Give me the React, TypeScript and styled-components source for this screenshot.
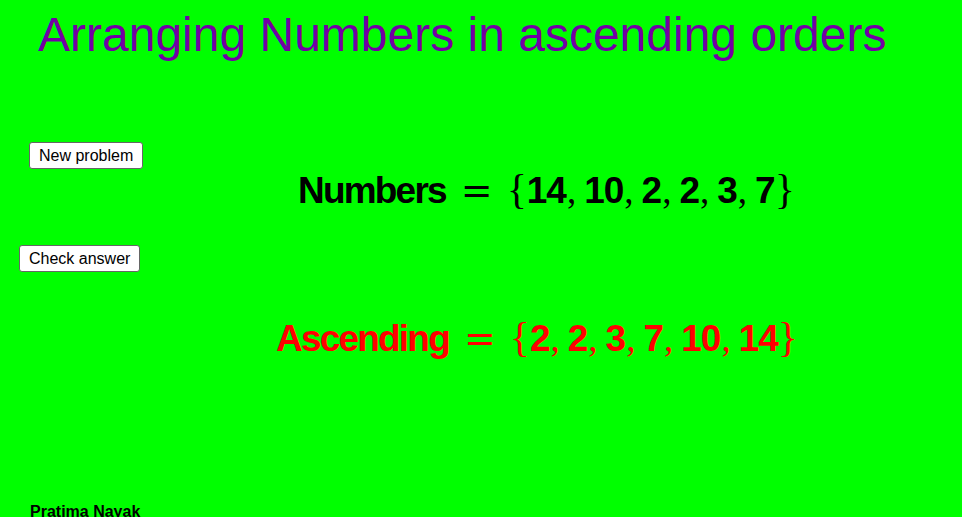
import styled, { createGlobalStyle } from "styled-components";

type OffsetProps = {
    $top: number;
    $left: number;
};

type EquationProps = OffsetProps & {
    $color: string;
};

const GlobalStyle = createGlobalStyle`
    html, body {
        margin: 0;
        padding: 0;
        background-color: #00ff00;
    }
`;

const Applet = styled.div`
    width: 962px;
    height: 517px;
    background-color: #00ff00;
    display: flex;
    flex-direction: column;
    overflow: hidden;
    font-family: "Liberation Sans", Arial, sans-serif;
`;

const Title = styled.h1`
    margin: 6px 0 0 38px;
    font-size: 48px;
    font-weight: normal;
    line-height: 58px;
    color: #7200a4;
    white-space: nowrap;
`;

const Board = styled.div`
    display: grid;
    grid-template-columns: 180px 1fr;
    flex: 1;
`;

const Controls = styled.div`
    display: flex;
    flex-direction: column;
    align-items: flex-start;
`;

const Button = styled.button<OffsetProps>`
    margin-top: ${(p) => p.$top}px;
    margin-left: ${(p) => p.$left}px;
    height: 27px;
    padding: 0 9px;
    background-color: #ffffff;
    border: 1px solid #666666;
    border-radius: 3px;
    font-family: "Liberation Sans", Arial, sans-serif;
    font-size: 16px;
    color: #000000;
    cursor: pointer;
`;

const Equations = styled.div`
    display: flex;
    flex-direction: column;
    align-items: flex-start;
`;

const Equation = styled.div<EquationProps>`
    margin-top: ${(p) => p.$top}px;
    margin-left: ${(p) => p.$left}px;
    display: flex;
    align-items: baseline;
    color: ${(p) => p.$color};
    font-family: "Liberation Sans", Arial, sans-serif;
    font-weight: bold;
    font-size: 37px;
    letter-spacing: -1px;
    line-height: 48px;
    white-space: nowrap;
`;

const Word = styled.span`
    letter-spacing: -1.8px;
`;

const Equals = styled.span`
    margin: 0 14px 0 15px;
    font-weight: normal;
    font-family: "DejaVu Sans", sans-serif;
    font-size: 38px;
    letter-spacing: 0;
`;

const Brace = styled.span`
    font-family: "Liberation Serif", serif;
    font-weight: normal;
    font-size: 42px;
    letter-spacing: 0;
`;

const Comma = styled.span`
    font-family: "Liberation Serif", serif;
    font-weight: normal;
    letter-spacing: 0;
    margin: 0 8px 0 1px;
`;

const Footer = styled.div`
    margin: 0 0 -5px 30px;
    font-size: 16px;
    font-weight: bold;
    color: #000000;
    line-height: 20px;
`;

const SetList = ({ values }: { values: number[] }) => (
    <>
        <Brace>{"{"}</Brace>
        {values.map((v, i) => (
            <span key={i}>
                {v}
                {i < values.length - 1 && <Comma>,</Comma>}
            </span>
        ))}
        <Brace>{"}"}</Brace>
    </>
);

const App = () => {
    return (
        <>
            <GlobalStyle />
            <Applet>
                <Title>Arranging Numbers in ascending orders</Title>
                <Board>
                    <Controls>
                        <Button $top={78} $left={29}>
                            New problem
                        </Button>
                        <Button $top={76} $left={19}>
                            Check answer
                        </Button>
                    </Controls>
                    <Equations>
                        <Equation $top={101} $left={118} $color="#000000">
                            <Word>Numbers</Word>
                            <Equals>=</Equals>
                            <SetList values={[14, 10, 2, 2, 3, 7]} />
                        </Equation>
                        <Equation $top={98} $left={96} $color="#ff0000">
                            <Word>Ascending</Word>
                            <Equals>=</Equals>
                            <SetList values={[2, 2, 3, 7, 10, 14]} />
                        </Equation>
                    </Equations>
                </Board>
                <Footer>Pratima Nayak</Footer>
            </Applet>
        </>
    );
};

export default App;
